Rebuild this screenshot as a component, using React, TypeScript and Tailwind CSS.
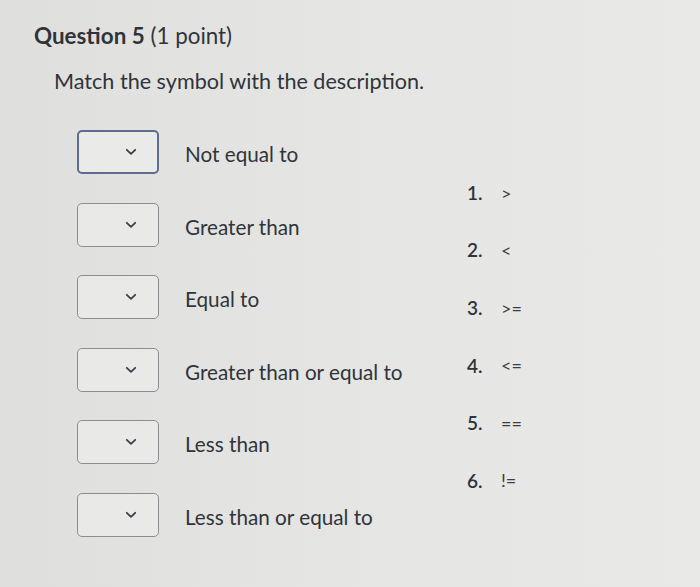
import React from "react";

const rows = [
  "Not equal to",
  "Greater than",
  "Equal to",
  "Greater than or equal to",
  "Less than",
  "Less than or equal to",
];

const items = [">", "<", ">=", "<=", "==", "!="];

function Chevron() {
  return (
    <svg width="12" height="8" viewBox="0 0 12 8" fill="none">
      <path d="M1.8 1.8 L6 5.8 L10.2 1.8" stroke="#3c4046" strokeWidth="1.8" strokeLinecap="round" strokeLinejoin="round" />
    </svg>
  );
}

export default function App() {
  return (
    <div
      className="w-[700px] h-[587px] overflow-hidden bg-[linear-gradient(90deg,#dfe0de_0%,#e5e6e4_50%,#e9eae8_100%)] text-[#30343a]"
      style={{ fontFamily: "Lato, 'Noto Sans', sans-serif" }}
    >
      <div className="pt-[22px] pl-[34px] text-[22.4px] leading-[28px]">
        <span className="font-bold">Question 5</span> <span>(1 point)</span>
      </div>
      <div className="pl-[54px] mt-[18px] text-[21.6px] leading-[26px]">
        Match the symbol with the description.
      </div>
      <div className="flex mt-[36px]">
        <div className="flex flex-col gap-[28.5px] pl-[77px] w-[440px]">
          {rows.map((r, i) => (
            <div key={r} className="flex items-center">
              <div
                className={
                  i === 0
                    ? "w-[82px] h-[44px] rounded-[5px] border-2 border-[#5d6d8e] bg-[#eaebe9] flex items-center justify-end pr-[20px]"
                    : "w-[82px] h-[44px] rounded-[5px] border border-[#8b8e91] bg-[#e9eae8] flex items-center justify-end pr-[21px]"
                }
              >
                <Chevron />
              </div>
              <div className="ml-[26px] pt-[4px] text-[20.7px] leading-[24px]">{r}</div>
            </div>
          ))}
        </div>
        <div className="flex flex-col gap-[33.6px] pt-[51px] pl-[27px]">
          {items.map((s, i) => (
            <div key={i} className="flex items-center h-[24px]">
              <span className="w-[34px] text-[19px] font-semibold">{i + 1}.</span>
              <span className="text-[18px] text-[#3a3e44]">{s}</span>
            </div>
          ))}
        </div>
      </div>
    </div>
  );
}
